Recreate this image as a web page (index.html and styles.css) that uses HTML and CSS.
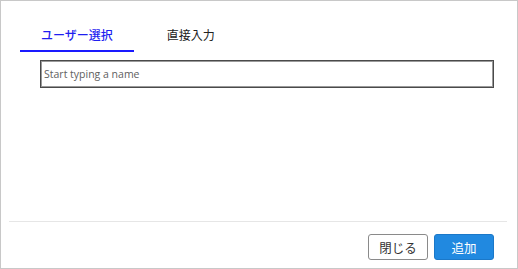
FILE: index.html
```html
<!DOCTYPE html>
<html lang="ja">
<head>
<meta charset="utf-8">
<title>ユーザー追加</title>
<link rel="stylesheet" href="styles.css">
</head>
<body>
<div class="dialog">
  <div class="tabs">
    <div class="tab active">ユーザー選択</div>
    <div class="tab">直接入力</div>
  </div>
  <div class="field">
    <input class="name-input" type="text" placeholder="Start typing a name">
  </div>
  <div class="spacer"></div>
  <div class="divider"></div>
  <div class="actions">
    <button class="btn btn-default">閉じる</button>
    <button class="btn btn-primary">追加</button>
  </div>
</div>
</body>
</html>
```

FILE: styles.css
```css
html, body {
  margin: 0;
  padding: 0;
  background: #ffffff;
}
body {
  font-family: "Noto Sans", "Noto Sans CJK JP", sans-serif;
}
.dialog {
  box-sizing: border-box;
  width: 518px;
  height: 269px;
  border: 1px solid #c8c8c8;
  display: flex;
  flex-direction: column;
}
.tabs {
  display: flex;
  gap: 12px;
  margin: 19px 0 0 19px;
}
.tab {
  font-family: "Noto Sans CJK JP", sans-serif;
  font-size: 12px;
  line-height: 30px;
  height: 30px;
  padding: 0 21px;
  color: #222222;
  border-bottom: 2px solid transparent;
}
.tab.active {
  color: #1f1ff0;
  font-weight: 500;
  border-bottom-color: #1a1aff;
}
.field {
  margin: 8px 0 0 39px;
}
.name-input {
  box-sizing: border-box;
  width: 454px;
  height: 28px;
  margin: 0;
  padding: 0 0 0 3px;
  border: 1px solid #4a4a4a;
  box-shadow: inset 0 0 0 1px #9a9a9a;
  border-radius: 0;
  font-family: "Open Sans", "Noto Sans", sans-serif;
  font-size: 10.5px;
  color: #333333;
  outline: none;
  background: #ffffff;
}
.name-input::placeholder {
  color: #606060;
}
.spacer {
  flex: 1;
}
.divider {
  height: 1px;
  background: #e6e6e6;
  margin: 0 10px 0 8px;
}
.actions {
  display: flex;
  justify-content: flex-end;
  gap: 6px;
  margin: 12px 23px 8px 0;
}
.btn {
  box-sizing: border-box;
  width: 60px;
  height: 26px;
  border-radius: 3px;
  font-family: "Noto Sans CJK JP", sans-serif;
  font-size: 12.5px;
  padding: 0;
  cursor: pointer;
}
.btn-default {
  background: #ffffff;
  border: 1px solid #8a8a8a;
  color: #333333;
}
.btn-primary {
  background: #2189e0;
  border: 1px solid #1b78c8;
  color: #ffffff;
}
```
